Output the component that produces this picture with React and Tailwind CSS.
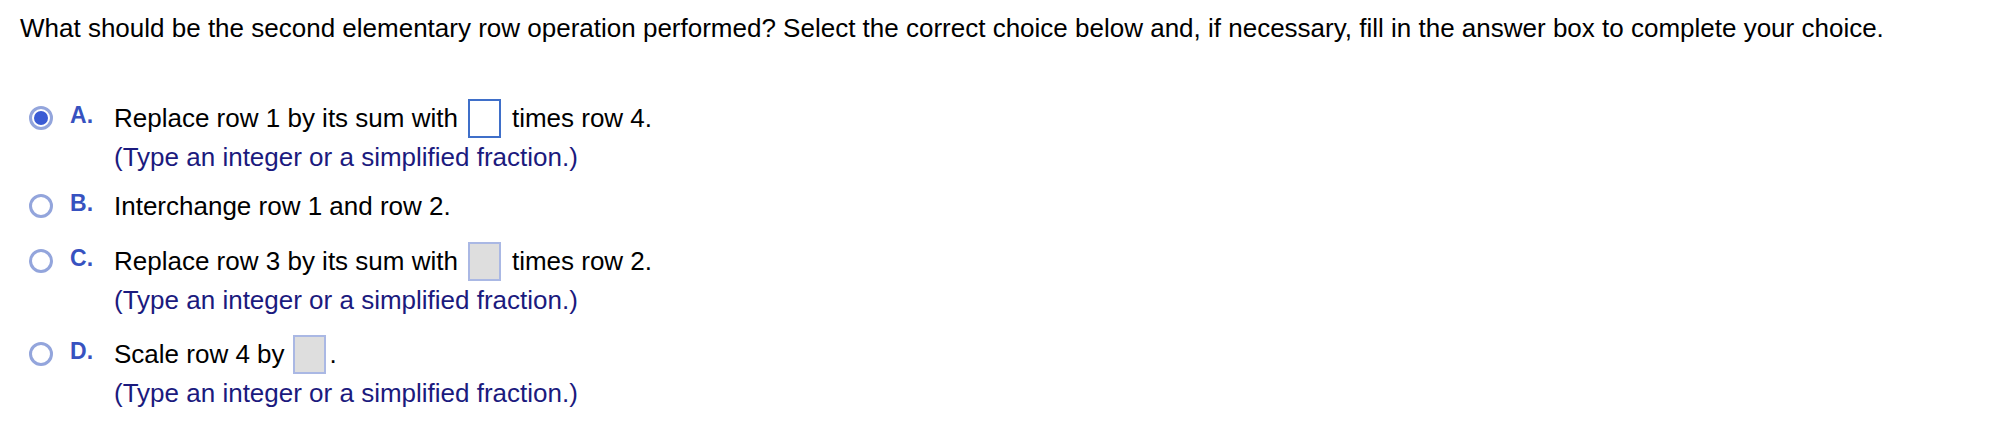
import React from 'react';

// Answer input box; the first one is focused (blue border, white fill)
function AnswerBox({ active = false, className = '' }) {
  return (
    <span
      className={
        'inline-block align-middle w-[33px] h-[39px] ' +
        (active
          ? 'bg-white border-2 border-[#3f6fc9]'
          : 'bg-[#dedede] border-2 border-[#aab8e4]') +
        ' ' +
        className
      }
    />
  );
}

function Radio({ checked }) {
  return (
    <span className="relative inline-flex items-center justify-center w-[24px] h-[24px] rounded-full border-[3px] border-[#93a5dc] bg-white shrink-0">
      {checked && <span className="w-[14px] h-[14px] rounded-full bg-[#3a5bd4]" />}
    </span>
  );
}

function Choice({ letter, checked, children, hint, className = '' }) {
  return (
    <div className={'flex items-start ' + className}>
      <div className="flex items-center h-[40px] w-[114px] pl-[29px] shrink-0">
        <Radio checked={checked} />
        <span className="ml-[17px] text-[23px] font-bold text-[#3752c0] -mt-[6px]">{letter}.</span>
      </div>
      <div className="flex flex-col">
        <div className="flex items-center h-[40px] text-[26px] text-black whitespace-nowrap">{children}</div>
        {hint && <div className="text-[26px] text-[#1b1a7e] leading-[32px] mt-[3px]">{hint}</div>}
      </div>
    </div>
  );
}

export default function App() {
  const hint = '(Type an integer or a simplified fraction.)';
  return (
    <div
      className="w-[2012px] h-[443px] bg-white overflow-hidden"
      style={{ fontFamily: '"Liberation Sans", Arial, sans-serif' }}
    >
      <div className="pl-[20px] pt-[14px] text-[26px] leading-[28px] text-black whitespace-nowrap">
        What should be the second elementary row operation performed? Select the correct choice below and, if necessary, fill in the answer box to complete your choice.
      </div>

      <div className="mt-[56px] flex flex-col">
        <Choice letter="A" checked hint={hint}>
          <span>Replace row 1 by its sum with</span>
          <AnswerBox active className="ml-[10px] mr-[11px]" />
          <span>times row 4.</span>
        </Choice>
        <Choice letter="B" className="mt-[13px]">
          <span>Interchange row 1 and row 2.</span>
        </Choice>
        <Choice letter="C" hint={hint} className="mt-[15px]">
          <span>Replace row 3 by its sum with</span>
          <AnswerBox className="ml-[10px] mr-[11px]" />
          <span>times row 2.</span>
        </Choice>
        <Choice letter="D" hint={hint} className="mt-[18px]">
          <span>Scale row 4 by</span>
          <AnswerBox className="ml-[8px] mr-[4px] w-[32px] h-[37px]" />
          <span>.</span>
        </Choice>
      </div>
    </div>
  );
}
